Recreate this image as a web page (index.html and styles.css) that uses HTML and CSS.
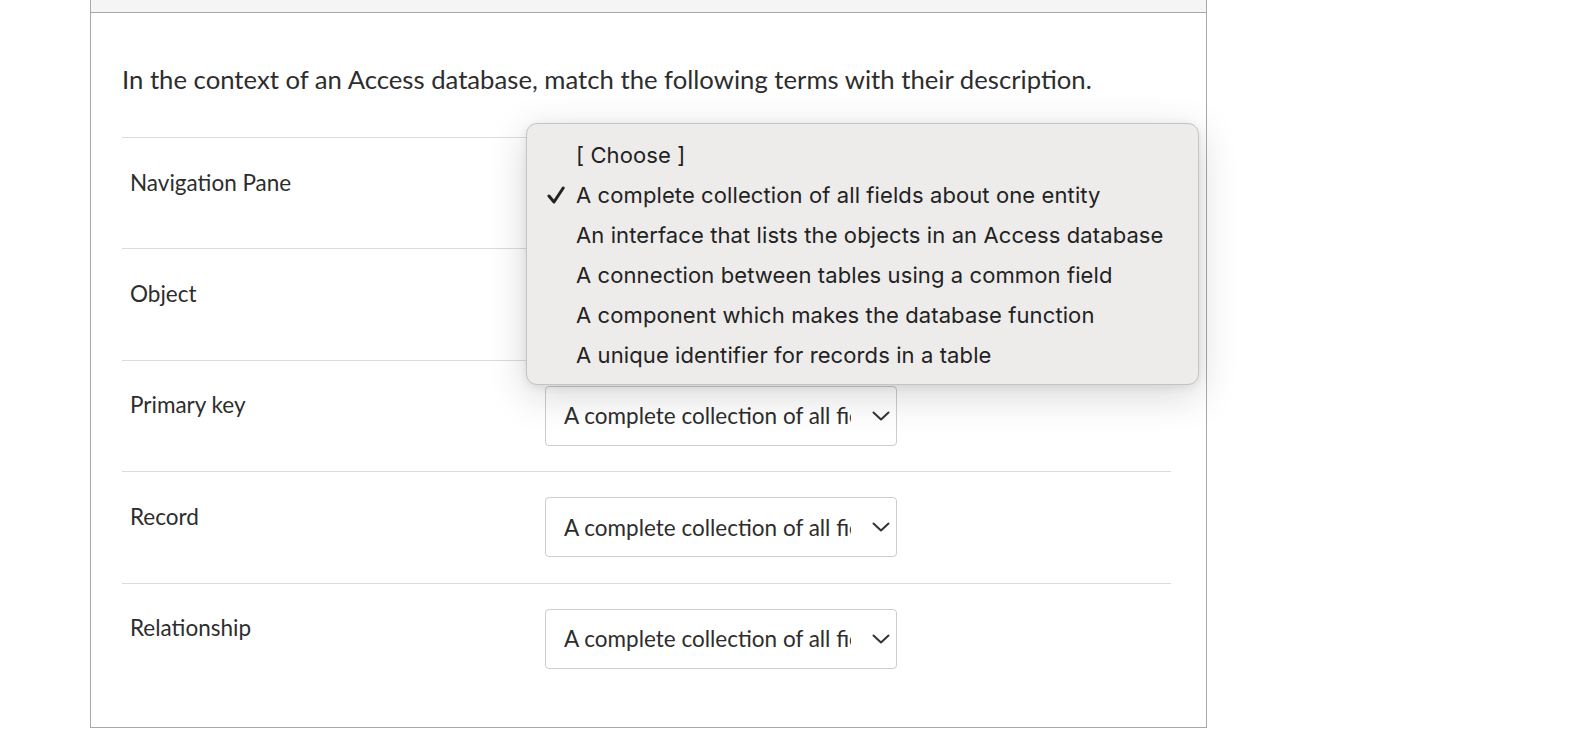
FILE: index.html
```html
<!DOCTYPE html>
<html>
<head>
<meta charset="utf-8">
<link rel="stylesheet" href="styles.css">
</head>
<body>
<div class="card">
  <div class="card-header"></div>
  <div class="card-body">
    <p class="question">In the context of an Access database, match the following terms with their description.</p>
    <div class="rows">
      <div class="row">
        <div class="label">Navigation Pane</div>
        <div class="answer">
          <div class="select">
            <span class="select-text">A complete collection of all fields about one entity</span>
            <svg class="chev" width="18" height="10" viewBox="0 0 18 10"><path d="M1.5 1.5 L9 8.5 L16.5 1.5" fill="none" stroke="#333" stroke-width="2" stroke-linecap="round" stroke-linejoin="round"/></svg>
          </div>
          <div class="menu">
            <div class="item">[ Choose ]</div>
            <div class="item checked"><svg class="check" width="18" height="18" viewBox="0 0 18 18"><path d="M2 10 L7 16 L16.2 2" fill="none" stroke="#222" stroke-width="3" stroke-linecap="round" stroke-linejoin="round"/></svg>A complete collection of all fields about one entity</div>
            <div class="item">An interface that lists the objects in an Access database</div>
            <div class="item">A connection between tables using a common field</div>
            <div class="item">A component which makes the database function</div>
            <div class="item">A unique identifier for records in a table</div>
          </div>
        </div>
      </div>
      <div class="row">
        <div class="label">Object</div>
        <div class="answer">
          <div class="select">
            <span class="select-text">A complete collection of all fields about one entity</span>
            <svg class="chev" width="18" height="10" viewBox="0 0 18 10"><path d="M1.5 1.5 L9 8.5 L16.5 1.5" fill="none" stroke="#333" stroke-width="2" stroke-linecap="round" stroke-linejoin="round"/></svg>
          </div>
        </div>
      </div>
      <div class="row">
        <div class="label">Primary key</div>
        <div class="answer">
          <div class="select">
            <span class="select-text">A complete collection of all fields about one entity</span>
            <svg class="chev" width="18" height="10" viewBox="0 0 18 10"><path d="M1.5 1.5 L9 8.5 L16.5 1.5" fill="none" stroke="#333" stroke-width="2" stroke-linecap="round" stroke-linejoin="round"/></svg>
          </div>
        </div>
      </div>
      <div class="row">
        <div class="label">Record</div>
        <div class="answer">
          <div class="select">
            <span class="select-text">A complete collection of all fields about one entity</span>
            <svg class="chev" width="18" height="10" viewBox="0 0 18 10"><path d="M1.5 1.5 L9 8.5 L16.5 1.5" fill="none" stroke="#333" stroke-width="2" stroke-linecap="round" stroke-linejoin="round"/></svg>
          </div>
        </div>
      </div>
      <div class="row">
        <div class="label">Relationship</div>
        <div class="answer">
          <div class="select">
            <span class="select-text">A complete collection of all fields about one entity</span>
            <svg class="chev" width="18" height="10" viewBox="0 0 18 10"><path d="M1.5 1.5 L9 8.5 L16.5 1.5" fill="none" stroke="#333" stroke-width="2" stroke-linecap="round" stroke-linejoin="round"/></svg>
          </div>
        </div>
      </div>
    </div>
  </div>
</div>
</body>
</html>
```
FILE: styles.css
```css
html, body {
  margin: 0;
  padding: 0;
  background: #ffffff;
}
body {
  font-family: Lato, "Noto Sans", sans-serif;
  color: #2d2d2d;
}
.card {
  margin-left: 90px;
  width: 1117px;
  box-sizing: border-box;
  border: 1px solid #a9a9a9;
  border-top: none;
}
.card-header {
  height: 12px;
  background: #f5f5f5;
  border-bottom: 1px solid #a9a9a9;
}
.card-body {
  padding: 48px 35px 33px 31px;
}
.question {
  margin: 0 0 40px 0;
  font-size: 25.7px;
  line-height: 36px;
}
.rows {
  border-top: 1px solid #dcdcdc;
}
.row {
  display: grid;
  grid-template-columns: 423px 1fr;
  padding: 25.2px 0;
  border-bottom: 1px solid #dcdcdc;
}
.row:last-child {
  border-bottom: none;
}
.label {
  padding-left: 8px;
  margin-top: 2.5px;
  font-size: 22.5px;
  line-height: 33.75px;
}
.answer {
  position: relative;
}
.select {
  width: 352px;
  height: 60px;
  box-sizing: border-box;
  border: 1px solid #c7cdd1;
  border-radius: 4px;
  background: #fff;
  display: flex;
  align-items: center;
  padding-left: 18px;
  font-size: 22.5px;
}
.select-text {
  width: 287px;
  overflow: hidden;
  white-space: nowrap;
}
.chev {
  margin-left: auto;
  margin-right: 6px;
}
.menu {
  position: absolute;
  left: -19px;
  top: -40px;
  width: 673px;
  height: 262px;
  box-sizing: border-box;
  padding-top: 11px;
  background: #edeceb;
  border: 1px solid #c4c4c4;
  border-radius: 11px;
  box-shadow: 0 10px 40px rgba(0, 0, 0, 0.16), 0 2px 8px rgba(0, 0, 0, 0.08);
  z-index: 10;
  font-family: Inter, "Noto Sans", sans-serif;
  font-size: 22px;
  letter-spacing: 0.1px;
  color: #222;
}
.item {
  position: relative;
  height: 40px;
  line-height: 40px;
  padding-left: 49px;
  white-space: nowrap;
}
.check {
  position: absolute;
  left: 20px;
  top: 11px;
}
```
